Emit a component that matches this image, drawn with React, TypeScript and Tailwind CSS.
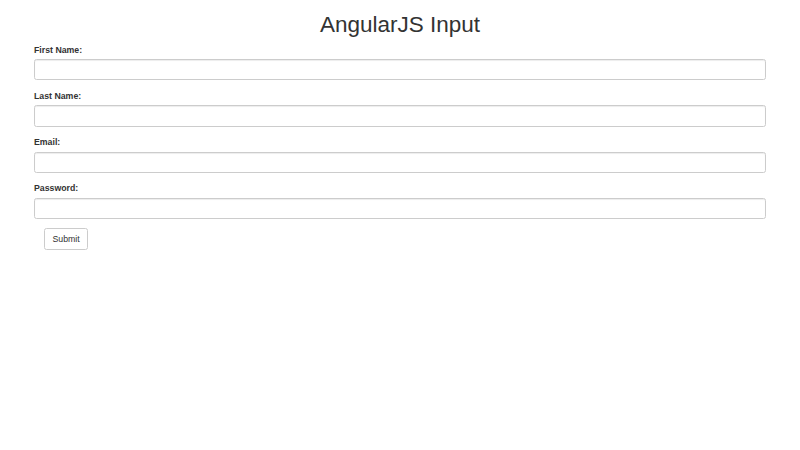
export default function App() {
  const fields = [
    { label: "First Name:", type: "text" },
    { label: "Last Name:", type: "text" },
    { label: "Email:", type: "email" },
    { label: "Password:", type: "password" },
  ];
  return (
    <div
      className="min-h-[450px] bg-white text-[#333]"
      style={{ fontFamily: '"Liberation Sans", Arial, sans-serif' }}
    >
      <h1 className="pt-[12.5px] mb-[6.25px] text-center text-[22.5px] leading-[24.75px] font-normal">
        AngularJS Input
      </h1>
      <form className="px-[34px]">
        {fields.map((f) => (
          <div key={f.label} className="mb-[9.4px]">
            <label className="block text-[8.75px] leading-[12.5px] font-bold mb-[3.1px]">
              {f.label}
            </label>
            <input
              type={f.type}
              className="block w-full h-[21.25px] rounded-[2.5px] border border-[#ccc] bg-white shadow-[inset_0_1px_1px_rgba(0,0,0,0.075)] outline-none"
            />
          </div>
        ))}
        <div className="flex pl-[10px]">
          <button
            type="button"
            className="block h-[21.25px] px-[7.5px] rounded-[2.5px] border border-[#ccc] bg-white text-[8.75px] leading-[12.5px] text-[#333]"
          >
            Submit
          </button>
        </div>
      </form>
    </div>
  );
}
